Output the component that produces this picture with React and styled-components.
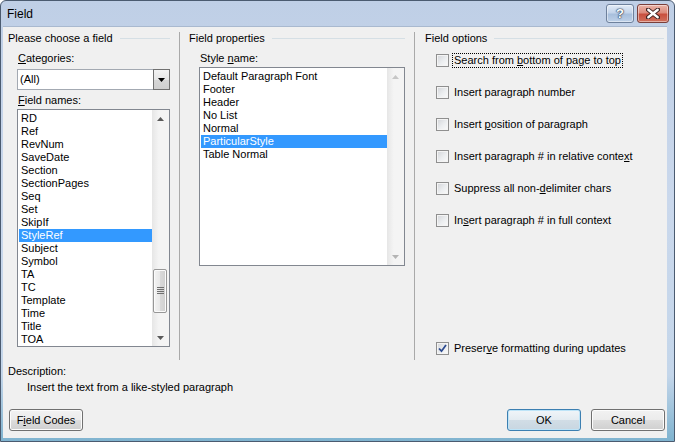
import React from 'react';
import styled, { createGlobalStyle } from 'styled-components';

const GlobalStyle = createGlobalStyle`
  html, body {
    margin: 0;
    padding: 0;
    background: #ffffff;
  }
  body {
    font-family: 'Liberation Sans', Arial, sans-serif;
    font-size: 11px;
    color: #000;
  }
  * {
    box-sizing: border-box;
  }
`;

const Window = styled.div`
  width: 675px;
  height: 442px;
  display: flex;
  flex-direction: column;
  border: 1px solid #4b5b70;
  border-radius: 6px 6px 0 0;
  background: linear-gradient(to bottom, #bfcfe6 0%, #cad8ec 45%, #c4d6ea 85%, #7fb3cf 100%);
  overflow: hidden;
`;

const TitleBar = styled.div`
  height: 25px;
  flex: none;
  display: flex;
  align-items: flex-start;
  padding: 3px 5px 0 6px;
`;

const Title = styled.div`
  font-size: 12px;
  line-height: 14px;
  margin-top: 3px;
  color: #000;
`;

const CaptionButtons = styled.div`
  margin-left: auto;
  display: flex;
  gap: 3px;
`;

const CaptionButton = styled.div`
  width: ${p => (p.$close ? 32 : 28)}px;
  height: 19px;
  border: 1px solid ${p => (p.$close ? '#7a3f3a' : '#6e819c')};
  border-radius: 3px;
  display: flex;
  align-items: center;
  justify-content: center;
  background: ${p =>
    p.$close
      ? 'linear-gradient(to bottom, #eab3a7 0%, #dc8b7c 45%, #c9503f 55%, #d0705c 100%)'
      : 'linear-gradient(to bottom, #e3ecf7 0%, #c3d4ea 45%, #a8bfdc 55%, #bed1e8 100%)'};
  box-shadow: inset 0 0 0 1px rgba(255, 255, 255, 0.45);
  color: #fff;
  font-weight: bold;
  font-size: 13px;
  text-shadow: 0 0 1px #283a55, 0 0 1px #283a55, 0 0 2px #283a55;
`;

const Client = styled.div`
  flex: 1;
  margin: 0 7px 3px 2px;
  background: #f0f0f0;
  border-top: 1px solid #a9b9cf;
  display: flex;
  flex-direction: column;
  padding: 0 2px 7px 5px;
`;

const Main = styled.div`
  height: 328px;
  margin-top: 5px;
  display: flex;
`;

const Column = styled.div`
  width: ${p => (p.$width ? `${p.$width}px` : 'auto')};
  flex: ${p => (p.$width ? 'none' : '1')};
  padding: ${p => p.$pad};
  display: flex;
  flex-direction: column;
`;

const VSeparator = styled.div`
  width: 1px;
  flex: none;
  background: #a9a9a9;
`;

const GroupHeader = styled.div`
  display: flex;
  align-items: center;
  gap: 7px;
  height: 13px;
  line-height: 13px;
  white-space: nowrap;
  &::after {
    content: '';
    flex: 1;
    height: 1px;
    background: #d5dfe5;
  }
`;

const FieldLabel = styled.div`
  line-height: 13px;
  height: 13px;
  margin: ${p => p.$mt}px 0 0 ${p => p.$ml}px;
  white-space: nowrap;
`;

const U = styled.span`
  text-decoration: underline;
  text-underline-offset: 1px;
`;

const Combo = styled.div`
  margin: 4px 0 0 9px;
  height: 21px;
  display: flex;
  border: 1px solid #a3a9b2;
  background: #fff;
`;

const ComboText = styled.div`
  flex: 1;
  line-height: 19px;
  padding-left: 2px;
`;

const ComboButton = styled.div`
  width: 17px;
  margin: -1px -1px -1px 0;
  border: 1px solid #707070;
  background: linear-gradient(to bottom, #f3f3f3 0%, #e6e6e6 50%, #d6d6d6 51%, #cfcfcf 100%);
  display: flex;
  align-items: center;
  justify-content: center;
`;

const ListBox = styled.div`
  margin: 2px 0 0 ${p => p.$ml}px;
  height: ${p => p.$h}px;
  border: 1px solid #828790;
  background: #fff;
  display: flex;
`;

const Items = styled.div`
  flex: 1;
  padding: 2px 0 0 1px;
  overflow: hidden;
`;

const Item = styled.div`
  height: 13px;
  line-height: 13px;
  padding: 0 2px;
  white-space: nowrap;
  background: ${p => (p.$selected ? '#3399ff' : 'transparent')};
  color: ${p => (p.$selected ? '#fff' : '#000')};
`;

const ScrollBar = styled.div`
  width: 17px;
  flex: none;
  display: flex;
  flex-direction: column;
  background: linear-gradient(to right, #e6e6e6, #f4f4f4 40%, #f4f4f4);
`;

const ScrollArrow = styled.div`
  height: 17px;
  flex: none;
  display: flex;
  align-items: center;
  justify-content: center;
`;

const ScrollTrack = styled.div`
  flex: 1;
`;

const Thumb = styled.div`
  margin: 0 2px 0 1px;
  height: 44px;
  border: 1px solid #979797;
  border-radius: 2px;
  background: linear-gradient(to right, #f3f3f3 0%, #e8e8e8 50%, #d9d9d9 51%, #d0d0d0 100%);
  box-shadow: inset 0 0 0 1px #fbfbfb;
  display: flex;
  align-items: center;
  justify-content: center;
`;

const CheckList = styled.div`
  margin: 7px 0 0 11px;
  display: flex;
  flex-direction: column;
  gap: 16px;
`;

const CheckRow = styled.div`
  height: 16px;
  display: flex;
  align-items: center;
  gap: 3px;
  margin-top: ${p => (p.$bottom ? 'auto' : '0')};
  margin-left: ${p => (p.$bottom ? '11px' : '0')};
  margin-bottom: ${p => (p.$bottom ? '4px' : '0')};
`;

const Box = styled.div`
  width: 13px;
  height: 13px;
  flex: none;
  border: 1px solid #8f8f8f;
  background: linear-gradient(135deg, #d2d4d8 0%, #eceef0 55%, #fafafa 100%);
  box-shadow: inset 0 0 0 1px #f4f4f4;
  display: flex;
  align-items: center;
  justify-content: center;
`;

const CheckText = styled.div`
  line-height: 13px;
  white-space: nowrap;
  padding: 0 1px;
  border: 1px ${p => (p.$focus ? 'dotted #000' : 'solid transparent')};
`;

const Description = styled.div`
  line-height: 13px;
  margin-top: ${p => p.$mt}px;
  padding-left: ${p => p.$indent}px;
`;

const ButtonRow = styled.div`
  margin-top: 15px;
  display: flex;
  gap: 10px;
  padding-left: 1px;
`;

const Button = styled.div`
  width: 74px;
  height: 22px;
  border: 1px solid ${p => (p.$default ? '#3c7fb1' : '#707070')};
  border-radius: 3px;
  background: ${p =>
    p.$default
      ? 'linear-gradient(to bottom, #f0f5f9 0%, #e3ebf1 50%, #d1dde6 51%, #c8d6e1 100%)'
      : 'linear-gradient(to bottom, #f2f2f2 0%, #ebebeb 50%, #dddddd 51%, #cfcfcf 100%)'};
  box-shadow: inset 0 0 0 1px ${p => (p.$default ? '#bde4f8' : '#fcfcfc')};
  display: flex;
  align-items: center;
  justify-content: center;
  line-height: 13px;
  margin-left: ${p => (p.$push ? 'auto' : '0')};
`;

const Arrow = ({ dir = 'down', color = '#000' }) => (
  <svg width="7" height="4" viewBox="0 0 7 4">
    {dir === 'down' ? (
      <path d="M0 0H7L3.5 4Z" fill={color} />
    ) : (
      <path d="M0 4H7L3.5 0Z" fill={color} />
    )}
  </svg>
);

const Grip = () => (
  <svg width="7" height="8" viewBox="0 0 7 8">
    {[0, 2, 4, 6].map(y => (
      <rect key={y} x="0" y={y} width="7" height="1" fill="#6f6f6f" />
    ))}
  </svg>
);

const CloseGlyph = () => (
  <svg width="14" height="11" viewBox="0 0 14 11">
    <path d="M2 1.5L12 9.5M12 1.5L2 9.5" stroke="#3d2220" strokeWidth="4.2" strokeLinecap="round" />
    <path d="M2.3 1.8L11.7 9.2M11.7 1.8L2.3 9.2" stroke="#fff" strokeWidth="2.4" strokeLinecap="round" />
  </svg>
);

const CheckMark = () => (
  <svg width="9" height="9" viewBox="0 0 9 9">
    <path d="M1 4.5L3.5 7.2L8 1" stroke="#2c4a8f" strokeWidth="1.8" fill="none" />
  </svg>
);

const fieldNames = [
  'RD', 'Ref', 'RevNum', 'SaveDate', 'Section', 'SectionPages', 'Seq', 'Set',
  'SkipIf', 'StyleRef', 'Subject', 'Symbol', 'TA', 'TC', 'Template', 'Time',
  'Title', 'TOA',
];

const styleNames = [
  'Default Paragraph Font', 'Footer', 'Header', 'No List', 'Normal',
  'ParticularStyle', 'Table Normal',
];

const options = [
  <>Search from <U>b</U>ottom of page to top</>,
  <>Insert para<U>g</U>raph number</>,
  <>Insert <U>p</U>osition of paragraph</>,
  <>Insert paragraph # in relative conte<U>x</U>t</>,
  <>Suppress all non-<U>d</U>elimiter chars</>,
  <>In<U>s</U>ert paragraph # in full context</>,
];

export default function App() {
  return (
    <>
      <GlobalStyle />
      <Window>
        <TitleBar>
          <Title>Field</Title>
          <CaptionButtons>
            <CaptionButton>?</CaptionButton>
            <CaptionButton $close>
              <CloseGlyph />
            </CaptionButton>
          </CaptionButtons>
        </TitleBar>
        <Client>
          <Main>
            <Column $width={171} $pad="0 9px 0 0">
              <GroupHeader>Please choose a field</GroupHeader>
              <FieldLabel $mt={7} $ml={10}>
                <U>C</U>ategories:
              </FieldLabel>
              <Combo>
                <ComboText>(All)</ComboText>
                <ComboButton>
                  <Arrow />
                </ComboButton>
              </Combo>
              <FieldLabel $mt={4} $ml={10}>
                <U>F</U>ield names:
              </FieldLabel>
              <ListBox $ml={9} $h={238}>
                <Items>
                  {fieldNames.map(n => (
                    <Item key={n} $selected={n === 'StyleRef'}>
                      {n}
                    </Item>
                  ))}
                </Items>
                <ScrollBar>
                  <ScrollArrow>
                    <Arrow dir="up" color="#5a5a5a" />
                  </ScrollArrow>
                  <ScrollTrack>
                    <Thumb style={{ marginTop: 142 }}>
                      <Grip />
                    </Thumb>
                  </ScrollTrack>
                  <ScrollArrow>
                    <Arrow color="#5a5a5a" />
                  </ScrollArrow>
                </ScrollBar>
              </ListBox>
            </Column>
            <VSeparator />
            <Column $width={234} $pad="0 9px 0 9px">
              <GroupHeader>Field properties</GroupHeader>
              <FieldLabel $mt={7} $ml={11}>
                Style <U>n</U>ame:
              </FieldLabel>
              <ListBox $ml={10} $h={199}>
                <Items>
                  {styleNames.map(n => (
                    <Item key={n} $selected={n === 'ParticularStyle'}>
                      {n}
                    </Item>
                  ))}
                </Items>
                <ScrollBar>
                  <ScrollArrow>
                    <Arrow dir="up" color="#c6c6c6" />
                  </ScrollArrow>
                  <ScrollTrack />
                  <ScrollArrow>
                    <Arrow color="#b4b4b4" />
                  </ScrollArrow>
                </ScrollBar>
              </ListBox>
            </Column>
            <VSeparator />
            <Column $pad="0 1px 0 10px">
              <GroupHeader>Field options</GroupHeader>
              <CheckList>
                {options.map((o, i) => (
                  <CheckRow key={i}>
                    <Box />
                    <CheckText $focus={i === 0}>{o}</CheckText>
                  </CheckRow>
                ))}
              </CheckList>
              <CheckRow $bottom>
                <Box>
                  <CheckMark />
                </Box>
                <CheckText>
                  Preser<U>v</U>e formatting during updates
                </CheckText>
              </CheckRow>
            </Column>
          </Main>
          <Description $mt={5} $indent={0}>Description:</Description>
          <Description $mt={3} $indent={19}>
            Insert the text from a like-styled paragraph
          </Description>
          <ButtonRow>
            <Button>
              <span>
                F<U>i</U>eld Codes
              </span>
            </Button>
            <Button $default $push>
              OK
            </Button>
            <Button>Cancel</Button>
          </ButtonRow>
        </Client>
      </Window>
    </>
  );
}
